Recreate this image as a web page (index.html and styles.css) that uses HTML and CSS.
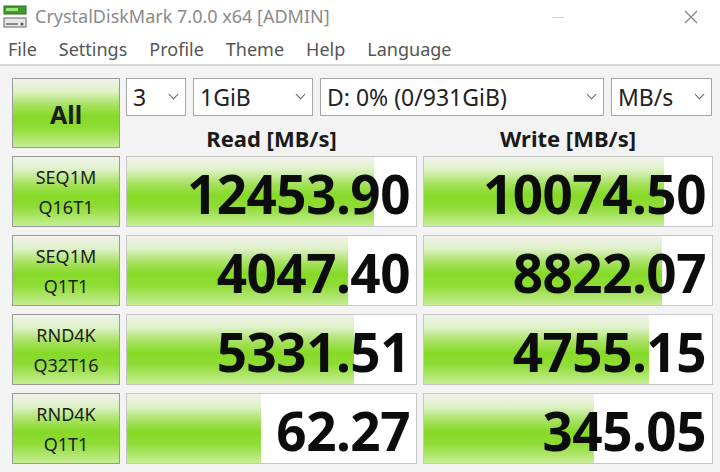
FILE: index.html
```html
<html>
<head>
  <link rel="stylesheet" href="styles.css">
</head>
<body>
  <div class="titlebar">
    <svg class="appicon" width="26" height="24" viewBox="0 0 26 24">
      <rect x="1" y="1" width="22" height="8" fill="#3f9b2c" stroke="#2d6e1f"/>
      <rect x="3" y="3" width="12" height="3" fill="#9fe07a"/>
      <rect x="1" y="13" width="22" height="9" fill="#e8e8e8" stroke="#666"/>
      <rect x="3" y="18" width="12" height="2" fill="#888"/>
      <circle cx="19" cy="19" r="1.5" fill="#555"/>
    </svg>
    <div class="title">CrystalDiskMark 7.0.0 x64 [ADMIN]</div>
    <div class="winbtn minimize">&mdash;</div>
    <div class="winbtn close">
      <svg width="14" height="14" viewBox="0 0 14 14"><path d="M1 1 L13 13 M13 1 L1 13" stroke="#888" stroke-width="1.3"/></svg>
    </div>
  </div>
  <div class="menubar">
    <span class="menu">File</span>
    <span class="menu">Settings</span>
    <span class="menu">Profile</span>
    <span class="menu">Theme</span>
    <span class="menu">Help</span>
    <span class="menu">Language</span>
  </div>

  <div class="main">
    <div class="btn all">All</div>
    <div class="topright">
      <div class="combos">
        <div class="combo c-count"><span>3</span><i class="chev"></i></div>
        <div class="combo c-size"><span>1GiB</span><i class="chev"></i></div>
        <div class="combo c-drive"><span>D: 0% (0/931GiB)</span><i class="chev"></i></div>
        <div class="combo c-unit"><span>MB/s</span><i class="chev"></i></div>
      </div>
      <div class="head">Read [MB/s]</div>
      <div class="head">Write [MB/s]</div>
    </div>

    <div class="btn label">SEQ1M<br>Q16T1</div>
    <div class="result"><div class="bar" style="width:85.6%"></div><span>12453.90</span></div>
    <div class="result"><div class="bar" style="width:83.4%"></div><span>10074.50</span></div>

    <div class="btn label">SEQ1M<br>Q1T1</div>
    <div class="result"><div class="bar" style="width:76.3%"></div><span>4047.40</span></div>
    <div class="result"><div class="bar" style="width:82.8%"></div><span>8822.07</span></div>

    <div class="btn label">RND4K<br>Q32T16</div>
    <div class="result"><div class="bar" style="width:78.7%"></div><span>5331.51</span></div>
    <div class="result"><div class="bar" style="width:78%"></div><span>4755.15</span></div>

    <div class="btn label">RND4K<br>Q1T1</div>
    <div class="result"><div class="bar" style="width:46.4%"></div><span>62.27</span></div>
    <div class="result"><div class="bar" style="width:59%"></div><span>345.05</span></div>
  </div>
</body>
</html>
```

FILE: styles.css
```css
html, body {
  margin: 0;
  padding: 0;
  font-family: 'Noto Sans', 'Open Sans', Arial, sans-serif;
  background: #f3f3f3;
  width: 720px;
  height: 472px;
  overflow: hidden;
}
.titlebar {
  height: 33px;
  background: #fff;
  display: flex;
  align-items: center;
}
.appicon {
  margin: 0 6px 0 3px;
}
.title {
  font-size: 18px;
  color: #8a8a8a;
  flex: 1;
  margin-top: -2px;
}
.winbtn {
  color: #ccc;
  font-size: 12px;
}
.minimize {
  margin-right: 120px;
}
.close {
  margin-right: 22px;
  height: 14px;
}
.menubar {
  height: 31px;
  background: #fff;
  border-bottom: 2px solid #d4d4d4;
  display: flex;
  align-items: center;
  padding-left: 8px;
}
.menu {
  font-size: 18px;
  color: #555;
  margin-right: 22px;
}
.main {
  display: grid;
  grid-template-columns: 108px 291px 290px;
  grid-template-rows: 70px repeat(4, 71px);
  column-gap: 6px;
  row-gap: 8px;
  padding: 12px 0 0 12px;
}
.btn {
  box-sizing: border-box;
  border: 1px solid #9a9a9a;
  background: linear-gradient(to bottom, #f0f2ec 0%, #dff1c8 18%, #a8e262 38%, #86da27 55%, #8fdc36 72%, #c6ee94 100%);
  display: flex;
  align-items: center;
  justify-content: center;
  text-align: center;
  color: #1c1c1c;
}
.all {
  font-size: 25px;
  font-weight: bold;
  padding-top: 2px;
}
.label {
  font-size: 18px;
  line-height: 30px;
  padding-top: 1px;
}
.topright {
  grid-column: 2 / 4;
  display: grid;
  grid-template-columns: 291px 290px;
  grid-template-rows: 38px 32px;
  column-gap: 6px;
}
.combos {
  grid-column: 1 / 3;
  display: flex;
  gap: 7px;
}
.combo {
  box-sizing: border-box;
  height: 38px;
  border: 1px solid #a6a6a6;
  background: #fff;
  display: flex;
  align-items: center;
  justify-content: space-between;
  padding: 0 8px 0 6px;
  font-size: 23px;
  color: #222;
}
.c-count { width: 60px; }
.c-size { width: 120px; }
.c-drive { width: 284px; }
.c-unit { width: 101px; }
.chev {
  width: 6px;
  height: 6px;
  border-right: 1.2px solid #666;
  border-bottom: 1.2px solid #666;
  transform: rotate(45deg);
  margin-top: -5px;
}
.head {
  font-size: 22px;
  font-weight: bold;
  color: #1a1a1a;
  text-align: center;
  line-height: 32px;
  padding-top: 6px;
}
.result {
  position: relative;
  box-sizing: border-box;
  border: 1px solid #c6c6c6;
  background: #fff;
  display: flex;
  align-items: center;
  justify-content: flex-end;
  padding-right: 6px;
}
.bar {
  position: absolute;
  left: 0;
  top: 0;
  bottom: 0;
  background: linear-gradient(to bottom, #f0f2ec 0%, #dff1c8 18%, #a8e262 38%, #86da27 55%, #8fdc36 72%, #c6ee94 100%);
}
.result span {
  position: relative;
  font-size: 53px;
  font-weight: bold;
  color: #0c0c0c;
  letter-spacing: -0.5px;
  margin-top: 4px;
}
```
